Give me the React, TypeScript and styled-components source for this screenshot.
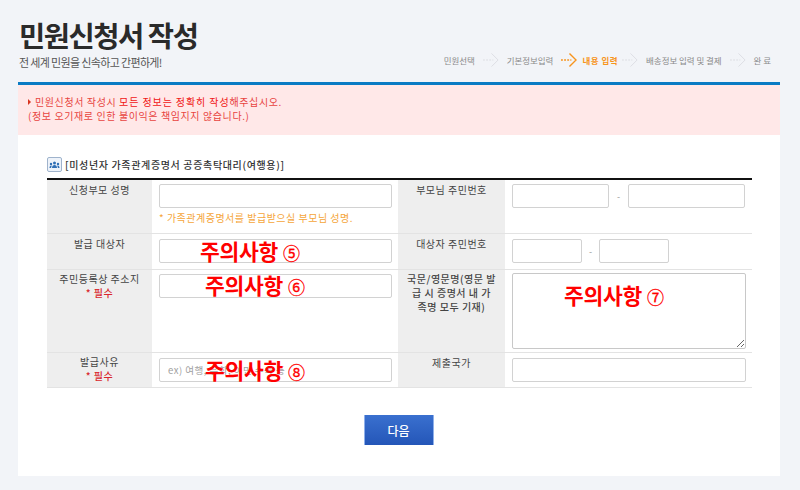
import React from "react";
import styled, { createGlobalStyle } from "styled-components";

const Global = createGlobalStyle`
  html, body { margin: 0; padding: 0; background: #f2f4f8; }
  body { font-family: "Noto Sans CJK KR", "Noto Sans", sans-serif; width: 800px; height: 490px; overflow: hidden; }
  * { box-sizing: border-box; }
`;

const Page = styled.div`
  width: 762px;
  margin-left: 18px;
  padding-top: 15px;
`;
const Header = styled.header`
  height: 67px;
  display: flex;
  justify-content: space-between;
  align-items: flex-end;
`;
const TitleBlock = styled.div`
  display: flex;
  flex-direction: column;
  padding-left: 1px;
`;
const Title = styled.h1`
  margin: 0 0 2px;
  font-size: 28.500px;
  line-height: 36px;
  font-weight: 700;
  letter-spacing: -1.450px;
  color: #2a2a2a;
`;
const Subtitle = styled.p`
  margin: 0 0 13px;
  font-size: 11px;
  line-height: 14px;
  letter-spacing: -0.650px;
  color: #555;
`;
const Steps = styled.ol`
  list-style: none;
  margin: 0 9px 14px 0;
  padding: 0;
  display: flex;
  align-items: center;
  gap: 8px;
`;
const Step = styled.li<{ $active?: boolean }>`
  font-size: 8.500px;
  line-height: 14px;
  letter-spacing: ${(p) => (p.$active ? "0.5px" : "-0.05px")};
  font-weight: ${(p) => (p.$active ? 700 : 400)};
  color: ${(p) => (p.$active ? "#f7941d" : "#8a8a8a")};
  margin: ${(p) => (p.$active ? "0 -4px 0 -3px" : "0")};
`;
const Arrow = ({ active }: { active?: boolean }) => (
  <svg width="16" height="16" viewBox="0 0 17 16" fill="none" aria-hidden="true">
    <path d="M0 8H11" stroke={active ? "#f7941d" : "#dcdde2"} strokeWidth={active ? 1.6 : 1.2} strokeDasharray="2 1.3" />
    <path d="M9 1L16 8L9 15" stroke={active ? "#f7941d" : "#dcdde2"} strokeWidth={active ? 1.5 : 1} />
  </svg>
);
const Notice = styled.div`
  height: 53px;
  border-top: 3px solid #0a7bc4;
  background: #ffe8e8;
  padding: 10px 10px 0 10px;
  font-size: 10px;
  line-height: 14px;
  letter-spacing: 0.600px;
  color: #e8443f;
`;
const Marker = styled.span`
  display: inline-block;
  width: 0;
  height: 0;
  border-left: 3px solid #d9351f;
  border-top: 3px solid transparent;
  border-bottom: 3px solid transparent;
  margin: 0 4px 1px 0;
`;
const Strong = styled.span`
  color: #f01414;
  letter-spacing: 0.900px;
`;
const Card = styled.main`
  height: 341px;
  background: #fff;
  padding: 21px 28px 0 29px;
`;
const Section = styled.div`
  display: flex;
  align-items: center;
  gap: 3px;
  height: 16px;
  margin-bottom: 6px;
  font-size: 10px;
  font-weight: 500;
  color: #333;
  letter-spacing: 0.650px;
`;
const SectionIcon = () => (
  <svg width="15" height="15" viewBox="0 0 15 15" aria-hidden="true">
    <rect x="0.5" y="0.5" width="14" height="14" rx="1.5" fill="#eef3fa" stroke="#9fb3cc" />
    <circle cx="7.5" cy="6" r="1.5" fill="#2f6fb5" />
    <circle cx="4" cy="7" r="1.2" fill="#2f6fb5" />
    <circle cx="11" cy="7" r="1.2" fill="#2f6fb5" />
    <path d="M5 11c0-2 1-3 2.500-3s2.500 1 2.500 3z" fill="#2f6fb5" />
    <path d="M2.500 11c0-1.500.6-2.500 1.700-2.500l.6.300-.8 2.200zM12.500 11c0-1.500-.6-2.500-1.700-2.500l-.6.300.8 2.200z" fill="#2f6fb5" />
  </svg>
);
const Table = styled.div`
  position: relative;
  width: 705px;
  border-top: 2px solid #111;
`;
const Row = styled.div<{ $h: number }>`
  display: grid;
  grid-template-columns: 105px 246px 107px 247px;
  height: ${(p) => p.$h}px;
  border-bottom: 1px solid #e3e3e3;
`;
const Label = styled.div<{ $top?: number; $line?: number }>`
  background: #eeeeee;
  padding: ${(p) => p.$top ?? 3}px 5px 0;
  text-align: center;
  font-size: 10px;
  line-height: ${(p) => p.$line ?? 13}px;
  color: #444;
  letter-spacing: 0.500px;
`;
const LabelBold = styled(Label)`
  font-weight: 500;
`;
const Required = styled.div`
  color: #d9262c;
  font-weight: 500;
`;
const Value = styled.div<{ $top?: number }>`
  padding: ${(p) => p.$top ?? 4}px 6px 0 7px;
`;
const Pair = styled.div`
  display: flex;
  align-items: center;
`;
const Field = styled.input<{ $w?: number }>`
  display: block;
  width: ${(p) => (p.$w ? `${p.$w}px` : "100%")};
  height: 24px;
  padding: 0 8px;
  border: 1px solid #d2d2d2;
  border-radius: 2px;
  background: #fff;
  outline: none;
  font-family: inherit;
  font-size: 9.500px;
  letter-spacing: 0.5px;
  &::placeholder { color: #a0a0a0; }
`;
const Area = styled.textarea`
  display: block;
  width: 100%;
  height: 76px;
  margin: 0;
  border: 1px solid #c8c8c8;
  border-radius: 2px;
  background: #fff;
  outline: none;
`;
const Dash = styled.span<{ $w: number }>`
  width: ${(p) => p.$w}px;
  text-align: center;
  font-size: 9px;
  color: #999;
`;
const Hint = styled.p`
  margin: 3px 0 0;
  font-size: 10px;
  line-height: 14px;
  color: #f5a53a;
  letter-spacing: 0.500px;
`;
const Caution = styled.span<{ $x: number; $y: number }>`
  position: absolute;
  left: ${(p) => p.$x}px;
  top: ${(p) => p.$y}px;
  font-size: 21.500px;
  line-height: 24px;
  font-weight: 700;
  letter-spacing: -0.300px;
  color: #ff0000;
  white-space: nowrap;
  pointer-events: none;
`;
const Circled = styled.span`
  margin-left: 5px;
  font-size: 17px;
  font-weight: 400;
  -webkit-text-stroke: 0.3px #ff0000;
`;
const Actions = styled.div`
  display: flex;
  justify-content: center;
  padding: 27px 2px 0 0;
`;
const NextButton = styled.button`
  width: 70px;
  height: 30px;
  border: 0;
  border-left: 1px solid #8fb0ea;
  border-right: 1px solid #8fb0ea;
  background: linear-gradient(#3a70cf, #2456b8);
  color: #fff;
  font-family: inherit;
  font-size: 12px;
  font-weight: 500;
  padding: 0;
`;

export default function App() {
  return (
    <>
      <Global />
      <Page>
        <Header>
          <TitleBlock>
            <Title>민원신청서 작성</Title>
            <Subtitle>전 세계 민원을 신속하고 간편하게!</Subtitle>
          </TitleBlock>
          <Steps>
            <Step>민원선택</Step>
            <Arrow />
            <Step>기본정보입력</Step>
            <Arrow active />
            <Step $active>내용 입력</Step>
            <Arrow />
            <Step>배송정보 입력 및 결제</Step>
            <Arrow />
            <Step>완 료</Step>
          </Steps>
        </Header>
        <Notice>
          <Marker />민원신청서 작성시 <Strong>모든 정보는 정확히 작성</Strong>해주십시오.
          <br />
          (정보 오기재로 인한 불이익은 책임지지 않습니다.)
        </Notice>
        <Card>
          <Section>
            <SectionIcon />
            [미성년자 가족관계증명서 공증촉탁대리(여행용)]
          </Section>
          <Table>
            <Row $h={54}>
              <Label>신청부모 성명</Label>
              <Value>
                <Field />
                <Hint>* 가족관계증명서를 발급받으실 부모님 성명.</Hint>
              </Value>
              <Label>부모님 주민번호</Label>
              <Value>
                <Pair>
                  <Field $w={97} />
                  <Dash $w={19}>-</Dash>
                  <Field $w={117} />
                </Pair>
              </Value>
            </Row>
            <Row $h={36}>
              <Label>발급 대상자</Label>
              <Value $top={5}><Field /></Value>
              <Label>대상자 주민번호</Label>
              <Value $top={5}>
                <Pair>
                  <Field $w={70} />
                  <Dash $w={17}>-</Dash>
                  <Field $w={70} />
                </Pair>
              </Value>
            </Row>
            <Row $h={83}>
              <Label $top={2} $line={14}>
                주민등록상 주소지
                <Required>* 필수</Required>
              </Label>
              <Value><Field /></Value>
              <LabelBold $top={2} $line={14}>
                국문/영문명(영문 발<br />급 시 증명서 내 가<br />족명 모두 기재)
              </LabelBold>
              <Value $top={3}><Area /></Value>
            </Row>
            <Row $h={35}>
              <Label $top={2} $line={14}>
                발급사유
                <Required>* 필수</Required>
              </Label>
              <Value $top={5}><Field placeholder="ex) 여행, 유학, 이민 수속 등" /></Value>
              <Label $top={3}>제출국가</Label>
              <Value $top={5}><Field /></Value>
            </Row>
            <Caution $x={153} $y={59}>주의사항<Circled>⑤</Circled></Caution>
            <Caution $x={158} $y={93}>주의사항<Circled>⑥</Circled></Caution>
            <Caution $x={517} $y={103}>주의사항<Circled>⑦</Circled></Caution>
            <Caution $x={158} $y={178}>주의사항<Circled>⑧</Circled></Caution>
          </Table>
          <Actions>
            <NextButton>다음</NextButton>
          </Actions>
        </Card>
      </Page>
    </>
  );
}
